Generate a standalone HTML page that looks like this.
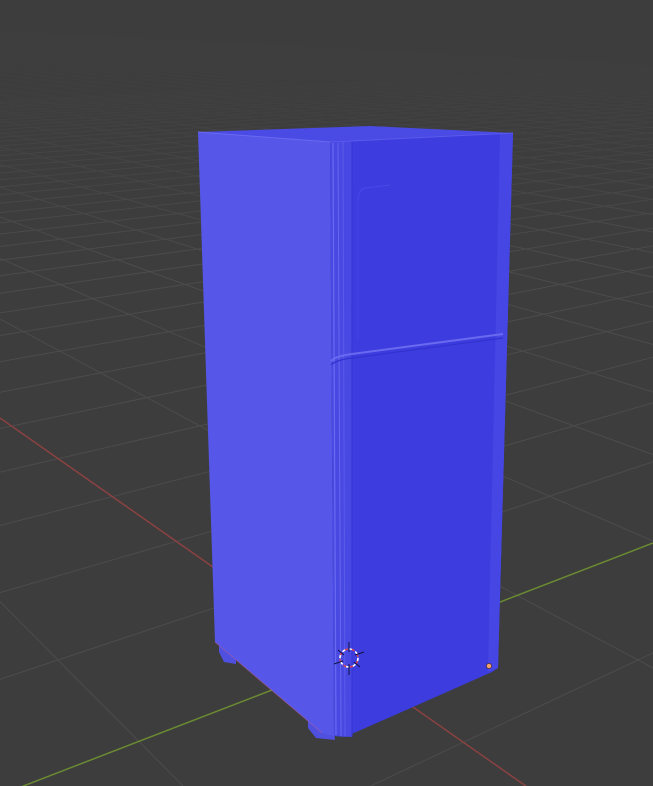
<!DOCTYPE html>
<html><head><meta charset="utf-8">
<style>
html,body{margin:0;padding:0;background:#3d3d3d;width:653px;height:786px;overflow:hidden}
svg{display:block;overflow:hidden}
</style></head>
<body>
<svg id="s" width="653" height="786" viewBox="0 0 653 786" xmlns="http://www.w3.org/2000/svg">
<defs>
<linearGradient id="fade" x1="0" y1="0" x2="0" y2="1">
<stop offset="0" stop-color="#3d3d3d" stop-opacity="1"/>
<stop offset="0.35" stop-color="#3d3d3d" stop-opacity="0.85"/>
<stop offset="1" stop-color="#3d3d3d" stop-opacity="0"/>
</linearGradient>
</defs>
<rect width="653" height="786" fill="#3d3d3d"/>
<g id="grid" stroke="#4c4c4c" stroke-width="1"></g>
<rect x="0" y="0" width="653" height="260" fill="url(#fade)"/>
<line x1="0" y1="418" x2="653" y2="875" stroke="#8c4141" stroke-width="1.5"/>
<line x1="0" y1="795" x2="653" y2="543" stroke="#6a8a32" stroke-width="1.5"/>
<polygon points="219,640 236,648 236,664 224,662 219,652" fill="#4f4fe0"/>
<polygon points="308,712 333,722 335,740 316,738 308,728" fill="#4f4fe0"/>
<polygon points="198,132 370,126 513,133 330,142" fill="#4a4ae4"/>
<polygon points="198,132 330,142 334,736 322,733 215,642" fill="#5656e8"/>
<polygon points="330,142 513,133 498,668 492,672 345,737 334,736" fill="#3d3ddf"/>
<polygon points="500,134 513,133 498,668 488,672" fill="#4646e4"/>
<polygon points="330,142 352,140 352,737 334,736" fill="#4848e3"/>
<line x1="333" y1="143" x2="336" y2="735" stroke="#6a6af0" stroke-width="1.2"/>
<line x1="338" y1="143" x2="341" y2="736" stroke="#6767ee" stroke-width="1"/>
<line x1="343" y1="142" x2="345" y2="736" stroke="#5b5bea" stroke-width="1"/>
<line x1="352" y1="141" x2="352" y2="737" stroke="#3535d6" stroke-width="1"/>
<path d="M331,361 Q336,356 352,354 L503,334" stroke="#6a6af0" stroke-width="2" fill="none"/>
<path d="M331,365 Q336,360 352,358 L503,338" stroke="#3232d0" stroke-width="1.2" fill="none"/>
<path d="M358,200 Q358,190 365,188 L390,185" stroke="#4a4ae6" stroke-width="1" fill="none"/>
<line x1="358" y1="200" x2="358" y2="340" stroke="#4444e2" stroke-width="1"/>
<line x1="198" y1="132" x2="330" y2="142" stroke="#6a6af0" stroke-width="1"/>
<line x1="330" y1="142" x2="513" y2="133" stroke="#5a5aec" stroke-width="1"/>
<line x1="215" y1="642" x2="322" y2="733" stroke="#c06090" stroke-width="0.8" opacity="0.6"/>
<circle cx="349" cy="658" r="9" fill="none" stroke="#fff" stroke-width="1.6" stroke-dasharray="4 3"/>
<circle cx="349" cy="658" r="9" fill="none" stroke="#d0405a" stroke-width="1.6" stroke-dasharray="3 4" stroke-dashoffset="4"/>
<g stroke="#101040" stroke-width="1">
<line x1="349" y1="642" x2="349" y2="652"/><line x1="349" y1="664" x2="349" y2="675"/>
<line x1="334" y1="664" x2="343" y2="661"/><line x1="355" y1="655" x2="364" y2="652"/>
<line x1="338" y1="650" x2="344" y2="655"/><line x1="354" y1="662" x2="360" y2="667"/>
</g>
<circle cx="489" cy="666" r="2.6" fill="#f0a070" stroke="#402010" stroke-width="0.6"/>
</svg>
<script>
(function(){
var g=document.getElementById('grid');
var Va=[-597,0],Vb=[2039,0],O=[348,660],a=0.11,b=0.11;
function P(u,v){var w=1+a*u+b*v;return [(a*u*Va[0]+b*v*Vb[0]+O[0])/w,(O[1])/w];}
function clip(x1,y1,x2,y2){
 // clip to viewport rectangle
 var t0=0,t1=1,dx=x2-x1,dy=y2-y1,p=[-dx,dx,-dy,dy],q=[x1,653-x1,y1,786-y1];
 for(var i=0;i<4;i++){if(p[i]===0){if(q[i]<0)return null;}else{var r=q[i]/p[i];if(p[i]<0){if(r>t1)return null;if(r>t0)t0=r;}else{if(r<t0)return null;if(r<t1)t1=r;}}}
 return [x1+t0*dx,y1+t0*dy,x1+t1*dx,y1+t1*dy];
}
function line(p,q){var dx=p[0]-q[0],dy=p[1]-q[1];var L=Math.hypot(dx,dy);var k=3000/L;
var c=clip(q[0],q[1],p[0]+dx*k,p[1]+dy*k);if(!c)return;
var l=document.createElementNS('http://www.w3.org/2000/svg','line');
l.setAttribute('x1',c[0].toFixed(1));l.setAttribute('y1',c[1].toFixed(1));l.setAttribute('x2',c[2].toFixed(1));l.setAttribute('y2',c[3].toFixed(1));g.appendChild(l);}
for(var c=-40;c<=40;c++){
 if(c===0)continue;
 var w=1+a*c; if(w>0.03){line(P(c,0),Vb);}
 var w2=1+b*c; if(w2>0.03){line(P(0,c),Va);}
}
})();
</script>
</body></html>
